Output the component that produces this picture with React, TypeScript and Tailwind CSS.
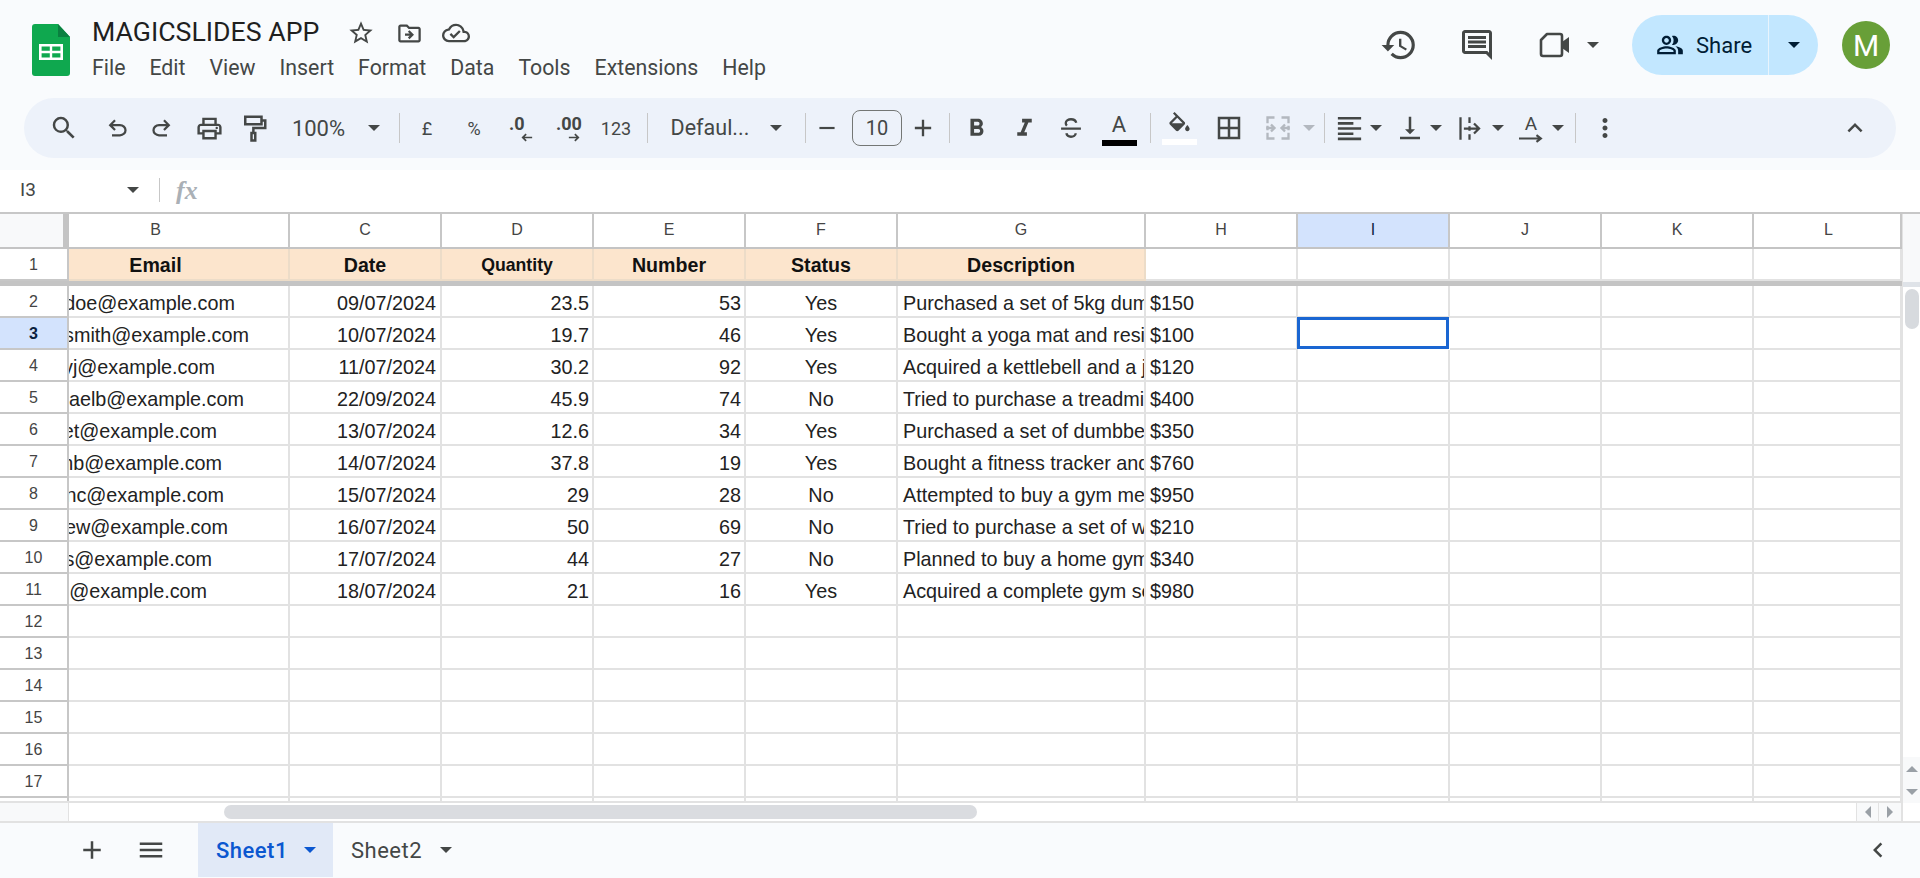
import { ReactNode } from "react";
import {
  MdSearch, MdOutlinePrint, MdAdd, MdRemove, MdFormatBold, MdFormatItalic,
  MdBorderAll, MdFormatAlignLeft, MdVerticalAlignBottom, MdMoreVert, MdExpandLess, MdHistory,
  MdOutlineComment, MdOutlinePeopleAlt, MdOutlineStarBorder, MdOutlineDriveFileMove, MdOutlineCloudDone, MdMenu,
  MdChevronLeft,
} from "react-icons/md";

const uiFont = "font-['Roboto',sans-serif]";
const cellFont = "font-['Liberation_Sans',Arial,sans-serif]";

const menus = ["File", "Edit", "View", "Insert", "Format", "Data", "Tools", "Extensions", "Help"];

const rows = [
  { email: "doe@example.com", pad: "pr-[53px]", date: "09/07/2024", qty: "23.5", num: "53", status: "Yes", desc: "Purchased a set of 5kg dum", price: "$150" },
  { email: "smith@example.com", pad: "pr-[39px]", date: "10/07/2024", qty: "19.7", num: "46", status: "Yes", desc: "Bought a yoga mat and resi", price: "$100" },
  { email: "vj@example.com", pad: "pr-[73px]", date: "11/07/2024", qty: "30.2", num: "92", status: "Yes", desc: "Acquired a kettlebell and a j", price: "$120" },
  { email: "aelb@example.com", pad: "pr-[44px]", date: "22/09/2024", qty: "45.9", num: "74", status: "No", desc: "Tried to purchase a treadmi", price: "$400" },
  { email: "et@example.com", pad: "pr-[71px]", date: "13/07/2024", qty: "12.6", num: "34", status: "Yes", desc: "Purchased a set of dumbbe", price: "$350" },
  { email: "nb@example.com", pad: "pr-[66px]", date: "14/07/2024", qty: "37.8", num: "19", status: "Yes", desc: "Bought a fitness tracker and", price: "$760" },
  { email: "nc@example.com", pad: "pr-[64px]", date: "15/07/2024", qty: "29", num: "28", status: "No", desc: "Attempted to buy a gym me", price: "$950" },
  { email: "ew@example.com", pad: "pr-[60px]", date: "16/07/2024", qty: "50", num: "69", status: "No", desc: "Tried to purchase a set of w", price: "$210" },
  { email: "s@example.com", pad: "pr-[76px]", date: "17/07/2024", qty: "44", num: "27", status: "No", desc: "Planned to buy a home gym", price: "$340" },
  { email: "@example.com", pad: "pr-[81px]", date: "18/07/2024", qty: "21", num: "16", status: "Yes", desc: "Acquired a complete gym se", price: "$980" },
];

const gridCols = "grid grid-cols-[69px_221px_152px_152px_152px_152px_248px_152px_152px_152px_152px_148px]";
const cellBase = `border-r-2 border-b-2 h-[32px] overflow-hidden whitespace-nowrap flex items-center ${cellFont}`;
const cell = `${cellBase} border-[#e2e2e2] bg-white pt-[5px] text-[19.8px] text-[#222]`;
const headCell = `${cellBase} border-[#ecdcc8] bg-[#fce5cd] pt-[3px] justify-center font-bold text-[#111]`;
const rowNum = `h-[32px] flex items-center justify-center pt-[1px] border-r-2 border-b-2 border-[#c7c7c7] text-[16px] ${cellFont}`;

function Caret({ className = "" }: { className?: string }) {
  return (
    <svg viewBox="0 0 10 5" className={`w-[12px] h-[6px] shrink-0 fill-current ${className}`}>
      <path d="M0 0l5 5 5-5z" />
    </svg>
  );
}

function Sep({ className = "" }: { className?: string }) {
  return <div className={`w-px h-[30px] bg-[#c7c7c7] shrink-0 ${className}`} />;
}

function Tool({ className = "", children }: { className?: string; children: ReactNode }) {
  return <div className={`flex items-center justify-center shrink-0 h-full ${className}`}>{children}</div>;
}

function Logo() {
  return (
    <svg viewBox="0 0 38 52" className="w-[38px] h-[52px] shrink-0">
      <path d="M3 0h23l12 13v36a3 3 0 0 1-3 3H3a3 3 0 0 1-3-3V3a3 3 0 0 1 3-3z" fill="#0fa84f" />
      <path d="M26 0l12 13H26z" fill="#0a8040" />
      <path d="M7 20h24v16H7zm2.6 2.4v4.4h8.2v-4.4zm10.6 0v4.4h8.2v-4.4zM9.6 29.2v4.4h8.2v-4.4zm10.6 0v4.4h8.2v-4.4z" fill="#fff" fillRule="evenodd" />
    </svg>
  );
}

function UndoIcon({ className = "" }: { className?: string }) {
  return (
    <svg viewBox="0 0 24 24" className={`w-[27px] h-[27px] fill-current ${className}`}>
      <path d="M8 19v-2h7.1q1.575 0 2.738-1T19 13.5q0-1.5-1.162-2.5T15.1 10H8.8l2.6 2.6L10 14 5 9l5-5 1.4 1.4L8.8 8h6.3q2.425 0 4.163 1.575T21 13.5q0 2.35-1.737 3.925T15.1 19z" />
    </svg>
  );
}

function PaintIcon() {
  return (
    <svg viewBox="0 0 24 24" className="w-[30px] h-[30px] fill-none stroke-current stroke-2">
      <path d="M5 3h13v6H5zM18 6h3v6h-9.5v4M10 16h3v6h-3z" />
    </svg>
  );
}

function StrikeIcon() {
  return (
    <svg viewBox="0 0 24 24" className="w-[28px] h-[28px] fill-none stroke-current stroke-2">
      <path d="M16.5 7.5C16 5.5 14.2 4.5 12 4.5s-4.5 1-4.5 3.2c0 .9.4 1.7 1 2.3M3.5 12.5h17M8 16.5c.5 2 2 3 4 3s4-1 4-3" />
    </svg>
  );
}

function DecimalIcon({ label, dir }: { label: string; dir: "left" | "right" }) {
  return (
    <div className={`relative w-[38px] h-[34px] text-[#444746] ${uiFont}`}>
      <span className={`absolute top-[1px] text-[18px] font-bold leading-[24px] ${dir === "left" ? "left-[8px]" : "left-[5px]"}`}>{label}</span>
      <svg
        viewBox="0 0 14 10"
        className={`absolute bottom-[3px] w-[12px] h-[9px] fill-none stroke-current stroke-2 ${dir === "left" ? "right-[6px]" : "right-[9px]"}`}
      >
        {dir === "left" ? <path d="M13 5H2M6 1L2 5l4 4" /> : <path d="M1 5h11M8 1l4 4-4 4" />}
      </svg>
    </div>
  );
}

function MergeIcon() {
  return (
    <svg viewBox="0 0 24 24" className="w-[28px] h-[28px] fill-none stroke-[#b3b8bf] stroke-2">
      <path d="M3 8V3h6M15 3h6v5M3 16v5h6M15 21h6v-5M3 10v4M21 10v4" />
      <path d="M2 12h7M6 9l3 3-3 3M22 12h-7M18 9l-3 3 3 3" />
    </svg>
  );
}

function WrapIcon() {
  return (
    <svg viewBox="0 0 24 24" className="w-[27px] h-[27px] fill-none stroke-[#444746] stroke-2">
      <path d="M4 2v20M12 2v5M12 10v4M12 17v5M7 12h13M16 7.5l4.5 4.5-4.5 4.5" />
    </svg>
  );
}

function VideoIcon() {
  return (
    <svg viewBox="0 0 32 28" className="w-[32px] h-[28px] fill-none stroke-[#444746] stroke-[2.6]">
      <path d="M8 3h13a2 2 0 0 1 2 2v18a2 2 0 0 1-2 2H4a2 2 0 0 1-2-2V9z" strokeLinejoin="round" />
      <path d="M23 11l7-5v16l-7-5z" fill="#444746" stroke="none" />
    </svg>
  );
}

function FillIcon() {
  return (
    <svg viewBox="0 0 24 24" className="w-[27px] h-[27px] fill-[#444746]">
      <path d="M16.56 8.94L7.62 0 6.21 1.41l2.38 2.38-5.15 5.15c-.59.59-.59 1.54 0 2.12l5.5 5.5c.29.29.68.44 1.06.44s.77-.15 1.06-.44l5.5-5.5c.59-.58.59-1.53 0-2.12zM5.21 10L10 5.21 14.79 10H5.21zM19 11.5s-2 2.17-2 3.5c0 1.1.9 2 2 2s2-.9 2-2c0-1.33-2-3.5-2-3.5z" />
    </svg>
  );
}

function Header() {
  return (
    <header className={`h-[98px] flex items-start ${uiFont}`}>
      <div className="ml-[32px] mt-[24px]">
        <Logo />
      </div>
      <div className="ml-[22px] mt-[15px]">
        <div className="flex items-center h-[34px] text-[#1f1f1f]">
          <span className="text-[26.7px] w-[227px] whitespace-nowrap">MAGICSLIDES APP</span>
          <MdOutlineStarBorder className="ml-[28px] mt-[2px] text-[28px] text-[#444746]" />
          <MdOutlineDriveFileMove className="ml-[21px] mt-[2px] text-[27px] text-[#444746]" />
          <MdOutlineCloudDone className="ml-[19px] mt-[2px] text-[28px] text-[#444746]" />
        </div>
        <nav className="flex gap-[24px] mt-[6px] text-[21.3px] leading-[26px] text-[#444746]">
          {menus.map((m) => (
            <span key={m}>{m}</span>
          ))}
        </nav>
      </div>
      <div className="ml-auto flex items-center h-[60px] mt-[15px] text-[#444746]">
        <MdHistory className="text-[38px]" />
        <MdOutlineComment className="ml-[41px] text-[36px]" />
        <div className="ml-[44px]">
          <VideoIcon />
        </div>
        <Caret className="ml-[16px]" />
        <div className="ml-[33px] w-[186px] h-[60px] rounded-full bg-[#c2e7ff] flex items-center text-[#001d35]">
          <MdOutlinePeopleAlt className="ml-[24px] text-[28px] shrink-0" />
          <span className="ml-[12px] text-[22px] w-[62px]">Share</span>
          <div className="ml-[10px] w-px h-full bg-[#e8f4fd]" />
          <Caret className="ml-[19px]" />
        </div>
        <div className="ml-[24px] mr-[30px] w-[48px] h-[48px] rounded-full bg-[#689f38] text-white text-[30px] flex items-center justify-center">
          M
        </div>
      </div>
    </header>
  );
}

function Toolbar() {
  return (
    <div className={`mx-[24px] h-[60px] rounded-full bg-[#edf2fa] flex items-center text-[#444746] ${uiFont}`}>
      <Tool className="ml-[18px] w-[44px]"><MdSearch className="text-[30px]" /></Tool>
      <Tool className="ml-[8px] w-[44px]"><UndoIcon /></Tool>
      <Tool className="ml-[2px] w-[44px]"><UndoIcon className="-scale-x-100" /></Tool>
      <Tool className="ml-[3px] w-[44px]"><MdOutlinePrint className="text-[29px]" /></Tool>
      <Tool className="ml-[1px] w-[44px]"><PaintIcon /></Tool>
      <Tool className="ml-[15px] w-[55px] text-[22px]">100%</Tool>
      <Caret className="ml-[22px]" />
      <Sep className="ml-[19px]" />
      <Tool className="ml-[7px] w-[40px] text-[18px]">£</Tool>
      <Tool className="ml-[7px] w-[40px] text-[18px]">%</Tool>
      <Tool className="ml-[6px] w-[40px]"><DecimalIcon label=".0" dir="left" /></Tool>
      <Tool className="ml-[10px] w-[40px]"><DecimalIcon label=".00" dir="right" /></Tool>
      <Tool className="ml-[6px] w-[40px] text-[18px]">123</Tool>
      <Sep className="ml-[11px]" />
      <Tool className="ml-[22px] w-[80px] text-[21.5px] whitespace-nowrap">Defaul...</Tool>
      <Caret className="ml-[20px]" />
      <Sep className="ml-[23px]" />
      <Tool className="ml-[6px] w-[30px]"><MdRemove className="text-[26px]" /></Tool>
      <div className="ml-[10px] w-[50px] h-[36px] shrink-0 rounded-[8px] border border-[#747775] flex items-center justify-center text-[20px]">10</div>
      <Tool className="ml-[6px] w-[30px]"><MdAdd className="text-[28px]" /></Tool>
      <Sep className="ml-[11px]" />
      <Tool className="ml-[6px] w-[40px]"><MdFormatBold className="text-[29px]" /></Tool>
      <Tool className="ml-[8px] w-[40px]"><MdFormatItalic className="text-[29px]" /></Tool>
      <Tool className="ml-[7px] w-[40px]"><StrikeIcon /></Tool>
      <div className="ml-[9px] w-[38px] shrink-0 flex flex-col items-center">
        <span className="text-[22px] leading-[24px] mt-[3px]">A</span>
        <div className="w-[35px] h-[6px] bg-black mt-[3px]" />
      </div>
      <Sep className="ml-[12px]" />
      <div className="ml-[10px] w-[36px] shrink-0 flex flex-col items-center">
        <FillIcon />
        <div className="w-[35px] h-[6px] bg-white" />
      </div>
      <Tool className="ml-[12px] w-[40px]"><MdBorderAll className="text-[30px]" /></Tool>
      <Tool className="ml-[11px] w-[36px]"><MergeIcon /></Tool>
      <Caret className="ml-[7px] text-[#b3b8bf]" />
      <Sep className="ml-[9px]" />
      <Tool className="ml-[8px] w-[32px]"><MdFormatAlignLeft className="text-[31px]" /></Tool>
      <Caret className="ml-[5px]" />
      <Tool className="ml-[12px] w-[32px]"><MdVerticalAlignBottom className="text-[30px]" /></Tool>
      <Caret className="ml-[4px]" />
      <Tool className="ml-[11px] w-[32px]"><WrapIcon /></Tool>
      <Caret className="ml-[7px]" />
      <Tool className="ml-[11px] w-[32px]">
        <div className="flex flex-col items-center">
          <span className="text-[19px] leading-[20px]">A</span>
          <svg viewBox="0 0 22 8" className="w-[24px] h-[9px] fill-none stroke-current stroke-2">
            <path d="M0 4h20M16 1l4 3-4 3" />
          </svg>
        </div>
      </Tool>
      <Caret className="ml-[5px]" />
      <Sep className="ml-[11px]" />
      <Tool className="ml-[9px] w-[40px]"><MdMoreVert className="text-[30px]" /></Tool>
      <Tool className="ml-auto mr-[21px] w-[40px]"><MdExpandLess className="text-[30px]" /></Tool>
    </div>
  );
}

function FormulaBar() {
  return (
    <div className={`mt-[12px] h-[42px] pb-[2px] bg-white flex items-center text-[#444746] ${uiFont}`}>
      <span className="ml-[20px] w-[107px] text-[19px]">I3</span>
      <Caret />
      <div className="ml-[20px] w-px h-[24px] bg-[#c7c7c7]" />
      <span className="ml-[16px] text-[26px] italic font-bold text-[#aab0b6] font-['Liberation_Serif',serif]">fx</span>
    </div>
  );
}

function Sheet() {
  const letters = ["B", "C", "D", "E", "F", "G", "H", "I", "J", "K", "L"];
  const extra = Array.from({ length: 6 }, (_, i) => i + 12);

  return (
    <div className="flex border-t-2 border-[#c7c7c7] bg-white">
      <div className="w-[1902px] shrink-0">
        {/* column letters */}
        <div className={`${gridCols} h-[35px] border-b-2 border-[#c4c4c4]`}>
          <div className="bg-[#f8f9fa] border-r-[6px] border-[#c4c4c4]" />
          {letters.map((l) => (
            <div
              key={l}
              className={`flex items-center justify-center pb-[2px] border-r-2 border-[#c7c7c7] text-[16px] ${cellFont} ${
                l === "I" ? "bg-[#d3e3fd] text-[#0b1f3f]" : "text-[#444]"
              } ${l === "B" ? "pr-[46px]" : ""} ${l === "L" ? "pl-[3px]" : ""}`}
            >
              {l}
            </div>
          ))}
        </div>

        {/* frozen header row */}
        <div className={gridCols}>
          <div className={`${rowNum} text-[#444]`}>1</div>
          <div className={`${headCell} text-[19.6px] pr-[46px]`}>Email</div>
          <div className={`${headCell} text-[19.6px]`}>Date</div>
          <div className={`${headCell} text-[17.7px]`}>Quantity</div>
          <div className={`${headCell} text-[19.6px]`}>Number</div>
          <div className={`${headCell} text-[19.6px]`}>Status</div>
          <div className={`${headCell} text-[19.6px]`}>Description</div>
          {[0, 1, 2, 3, 4].map((i) => (
            <div key={i} className={cell} />
          ))}
        </div>
        <div className="h-[5px] bg-[#c4c4c4]" />

        {rows.map((r, i) => (
          <div key={r.date} className={gridCols}>
            <div className={i === 1 ? `${rowNum} bg-[#d3e3fd] text-[#0b1f3f] font-bold` : `${rowNum} text-[#444]`}>{i + 2}</div>
            <div className={`${cell} justify-end ${r.pad}`}>
              <span className="shrink-0">{r.email}</span>
            </div>
            <div className={`${cell} justify-end pr-[4px]`}>{r.date}</div>
            <div className={`${cell} justify-end pr-[3px]`}>{r.qty}</div>
            <div className={`${cell} justify-end pr-[3px]`}>{r.num}</div>
            <div className={`${cell} justify-center`}>{r.status}</div>
            <div className={`${cell} pl-[5px]`}>
              <span className="shrink-0">{r.desc}</span>
            </div>
            <div className={`${cell} pl-[4px]`}>{r.price}</div>
            {i === 1 ? (
              <div className="h-[32px] -ml-px mr-px -mt-px border-[3px] border-[#1a66d2] bg-white" />
            ) : (
              <div className={cell} />
            )}
            <div className={cell} />
            <div className={cell} />
            <div className={cell} />
          </div>
        ))}

        {extra.map((n) => (
          <div key={n} className={gridCols}>
            <div className={`${rowNum} text-[#444]`}>{n}</div>
            {letters.map((l) => (
              <div key={l} className={cell} />
            ))}
          </div>
        ))}

        {/* partial row and horizontal scrollbar */}
        <div className={`${gridCols} h-[5px] border-b-2 border-[#e2e2e2]`}>
          <div className="border-r-2 border-[#c7c7c7]" />
          {letters.map((l) => (
            <div key={l} className="border-r-2 border-[#e2e2e2]" />
          ))}
        </div>
        <div className="h-[18px] flex">
          <div className="w-[69px] bg-[#f8f9fa] border-r border-[#e2e2e2]" />
          <div className="ml-[155px] w-[753px] h-[14px] mt-[2px] rounded-full bg-[#dadce0]" />
          <div className="ml-auto w-[23px] bg-[#f8f9fa] border-x border-[#e2e2e2] flex items-center justify-center text-[#9aa0a6]">
            <Caret className="rotate-90" />
          </div>
          <div className="w-[23px] bg-[#f8f9fa] border-r border-[#e2e2e2] flex items-center justify-center text-[#9aa0a6]">
            <Caret className="-rotate-90" />
          </div>
        </div>
      </div>

      {/* vertical scrollbar */}
      <div className="w-[18px] shrink-0 flex flex-col border-l border-[#e2e2e2]">
        <div className="h-[68px] bg-[#f8f9fa]" />
        <div className="h-[5px] bg-[#dfe3e8]" />
        <div className="ml-[2px] mt-[2px] w-[14px] h-[40px] rounded-full bg-[#d7dade]" />
        <div className="mt-auto h-[46px] mb-[18px] bg-[#f8f9fa] flex flex-col items-center justify-around text-[#9aa0a6]">
          <Caret className="rotate-180" />
          <Caret />
        </div>
      </div>
    </div>
  );
}

function SheetTabs() {
  return (
    <footer className={`h-[56px] border-t-2 border-[#e2e2e2] flex items-center text-[#444746] ${uiFont}`}>
      <MdAdd className="ml-[77px] text-[30px]" />
      <MdMenu className="ml-[29px] text-[30px]" />
      <div className="ml-[32px] w-[135px] h-full bg-[#e1e9f7] flex items-center text-[#0b57d0] font-medium">
        <span className="ml-[18px] w-[72px] text-[22px] tracking-[0.5px] whitespace-nowrap">Sheet1</span>
        <Caret className="ml-[16px]" />
      </div>
      <span className="ml-[18px] w-[72px] text-[22px] tracking-[0.5px] whitespace-nowrap">Sheet2</span>
      <Caret className="ml-[17px]" />
      <MdChevronLeft className="ml-auto mr-[27px] text-[30px]" />
    </footer>
  );
}

export default function App() {
  return (
    <div className="w-[1920px] h-[878px] overflow-hidden bg-[#f9fbfd]">
      <Header />
      <Toolbar />
      <FormulaBar />
      <Sheet />
      <SheetTabs />
    </div>
  );
}
